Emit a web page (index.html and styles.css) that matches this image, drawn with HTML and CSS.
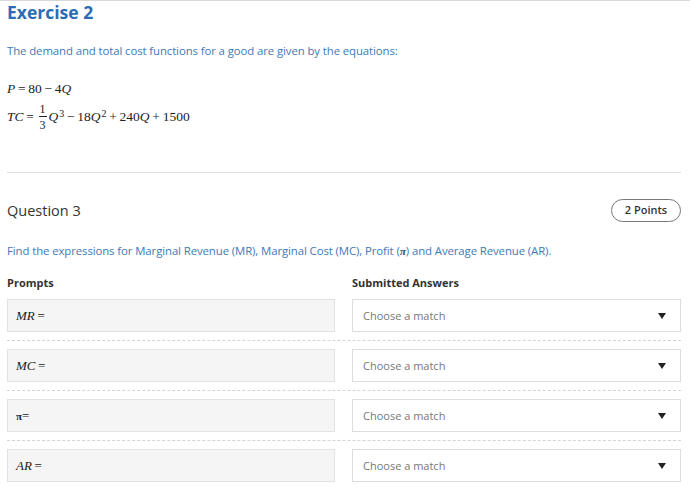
FILE: index.html
```html
<!DOCTYPE html>
<html>
<head>
<meta charset="utf-8">
<link rel="stylesheet" href="styles.css">
</head>
<body>
<div class="topline"></div>
<div class="page">
  <h1 class="title">Exercise 2</h1>
  <p class="desc">The demand and total cost functions for a good are given by the equations:</p>
  <div class="math">
    <div class="eq"><i>P</i>&thinsp;=&thinsp;80&thinsp;−&thinsp;4<i>Q</i></div>
    <div class="eq eq2"><i>TC</i>&thinsp;=&thinsp;<span class="frac"><span>1</span><span class="bar"></span><span>3</span></span><i>Q</i><sup>3</sup>&thinsp;−&thinsp;18<i>Q</i><sup>2</sup>&thinsp;+&thinsp;240<i>Q</i>&thinsp;+&thinsp;1500</div>
  </div>
  <hr class="sep">
  <div class="qhead">
    <h2 class="qtitle">Question 3</h2>
    <span class="pill">2 Points</span>
  </div>
  <p class="desc find">Find the expressions for Marginal Revenue (MR), Marginal Cost (MC), Profit (<b class="pi">π</b>) and Average Revenue (AR).</p>
  <div class="cols">
    <div class="colh">Prompts</div>
    <div class="colh">Submitted Answers</div>
  </div>
  <div class="row">
    <div class="prompt"><i>MR</i>&thinsp;=</div>
    <div class="select"><span>Choose a match</span><span class="arrow"></span></div>
  </div>
  <div class="row">
    <div class="prompt"><i>MC</i>&thinsp;=</div>
    <div class="select"><span>Choose a match</span><span class="arrow"></span></div>
  </div>
  <div class="row">
    <div class="prompt"><span class="pismall">π</span>=</div>
    <div class="select"><span>Choose a match</span><span class="arrow"></span></div>
  </div>
  <div class="row last">
    <div class="prompt"><i>AR</i>&thinsp;=</div>
    <div class="select"><span>Choose a match</span><span class="arrow"></span></div>
  </div>
</div>
</body>
</html>
```

FILE: styles.css
```css
html, body {
  margin: 0;
  padding: 0;
  background: #ffffff;
}
body {
  font-family: "Open Sans", "Liberation Sans", sans-serif;
  color: #333333;
}
.topline {
  height: 1px;
  background: #d8d8d8;
  width: 690px;
}
.page {
  padding-left: 7px;
  width: 674px;
}
.title {
  margin: 0;
  font-size: 17.5px;
  line-height: 22px;
  font-weight: 700;
  color: #2b6cb4;
}
.desc {
  margin: 0;
  font-size: 11.4px;
  line-height: 16px;
  color: #3f79b6;
  letter-spacing: -0.1px;
}
.title + .desc {
  margin-top: 20px;
}
.math {
  margin-top: 22px;
  font-family: "Liberation Serif", "Times New Roman", serif;
  font-size: 13.5px;
  color: #222222;
}
.eq {
  line-height: 16px;
  white-space: nowrap;
}
.eq2 {
  margin-top: 6px;
  height: 28px;
  line-height: 28px;
}
.eq sup {
  font-size: 10px;
  line-height: 0;
  vertical-align: 4px;
  margin-left: 1px;
}
.frac {
  display: inline-flex;
  flex-direction: column;
  align-items: center;
  vertical-align: middle;
  font-size: 12px;
  line-height: 12px;
  margin: 0 2px;
  position: relative;
  top: -1px;
}
.frac .bar {
  width: 8px;
  height: 1px;
  background: #222222;
  margin: 1px 0 2px;
}
.sep {
  margin: 41px 0 0 0;
  border: 0;
  height: 1px;
  background: #dddddd;
}
.qhead {
  margin-top: 26px;
  display: flex;
  align-items: center;
  justify-content: space-between;
  height: 23px;
}
.qtitle {
  margin: 0;
  font-size: 14.5px;
  font-weight: 400;
  line-height: 20px;
  color: #333333;
}
.pill {
  box-sizing: border-box;
  width: 70px;
  height: 23px;
  border: 1.5px solid #777777;
  border-radius: 12px;
  font-size: 11px;
  font-weight: 600;
  line-height: 20px;
  text-align: center;
  color: #333333;
}
.find {
  margin-top: 21px;
}
.cols {
  margin-top: 15px;
  display: grid;
  grid-template-columns: 328px 329px;
  column-gap: 17px;
  font-size: 11px;
  line-height: 17px;
  font-weight: 700;
  color: #333333;
}
.row {
  display: grid;
  grid-template-columns: 328px 329px;
  column-gap: 17px;
  padding: 8px 0 8px 0;
  border-bottom: 1px dashed #d4d4d4;
}
.row.last {
  border-bottom: 0;
}
.prompt {
  box-sizing: border-box;
  height: 33px;
  background: #f5f5f5;
  border: 1px solid #e2e2e2;
  padding-left: 8px;
  display: flex;
  align-items: center;
  font-family: "Liberation Serif", "Times New Roman", serif;
  font-size: 13px;
  color: #222222;
}
.pismall {
  font-family: "Liberation Serif", "Times New Roman", serif;
  font-weight: 700;
  font-size: 11px;
}
.pi {
  font-family: "Liberation Serif", "Times New Roman", serif;
  font-style: italic;
  color: #2b4f7a;
}
.select {
  box-sizing: border-box;
  height: 33px;
  background: #ffffff;
  border: 1px solid #dddddd;
  padding: 0 14px 0 10px;
  display: flex;
  align-items: center;
  justify-content: space-between;
  font-size: 11px;
  color: #777777;
}
.arrow {
  width: 0;
  height: 0;
  border-left: 4px solid transparent;
  border-right: 4px solid transparent;
  border-top: 6px solid #222222;
}
```
